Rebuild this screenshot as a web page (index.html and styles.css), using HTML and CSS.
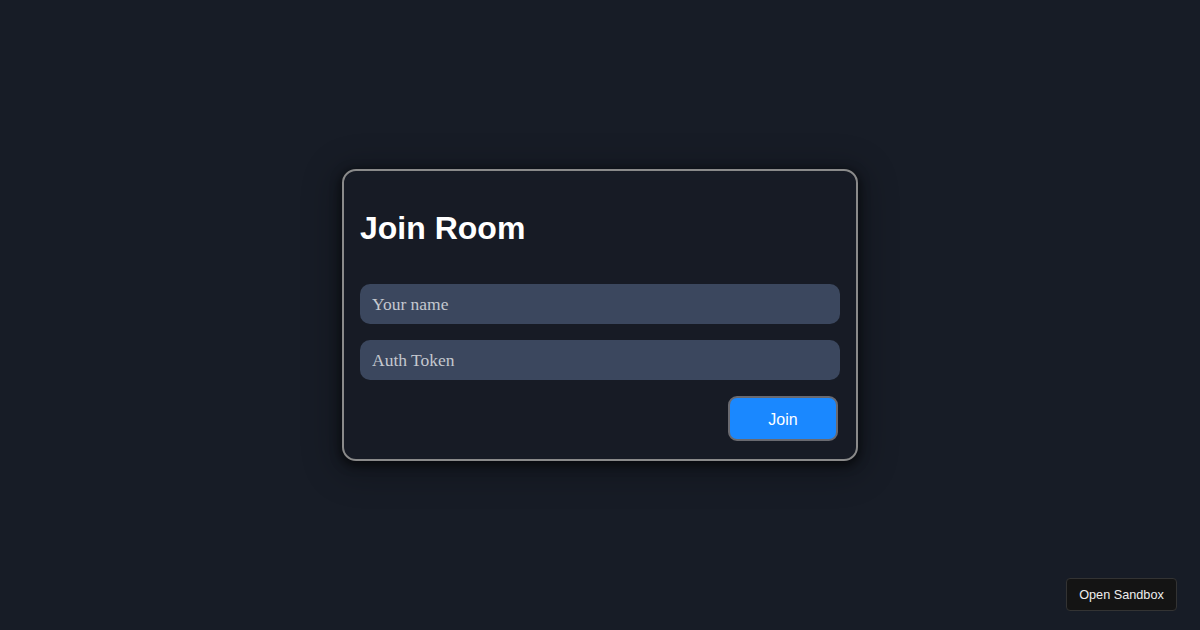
FILE: index.html
```html
<!DOCTYPE html>
<html>
<head>
<meta charset="utf-8">
<link rel="stylesheet" href="styles.css">
</head>
<body>
<main class="page">
  <section class="card">
    <h2 class="title">Join Room</h2>
    <form class="form">
      <input class="field" type="text" placeholder="Your name">
      <input class="field" type="text" placeholder="Auth Token">
      <div class="actions">
        <button class="join" type="button">Join</button>
      </div>
    </form>
  </section>
</main>
<a class="sandbox">Open Sandbox</a>
</body>
</html>
```

FILE: styles.css
```css
html, body {
  margin: 0;
  height: 100%;
  background: #171c26;
}
.page {
  height: 630px;
  display: flex;
  align-items: center;
  justify-content: center;
}
.card {
  box-sizing: border-box;
  width: 516px;
  height: 292px;
  padding: 16px;
  border: 2px solid #8a8a8a;
  border-radius: 14px;
  background: #171b25;
  box-shadow: 0 3px 10px 2px rgba(0, 0, 0, 0.55), 0 6px 32px 10px rgba(0, 0, 0, 0.22);
  display: flex;
  flex-direction: column;
}
.title {
  margin: 23px 0 37px;
  font-family: "Liberation Sans", Arial, sans-serif;
  font-size: 32px;
  line-height: 37px;
  font-weight: 700;
  color: #ffffff;
}
.form {
  display: flex;
  flex-direction: column;
  gap: 16px;
}
.field {
  box-sizing: border-box;
  height: 40px;
  width: 100%;
  border: none;
  border-radius: 10px;
  background: #3b475e;
  padding: 0 12px;
  font-family: "Liberation Serif", "Times New Roman", serif;
  font-size: 17.5px;
  color: #e0e3e8;
  outline: none;
}
.field::placeholder {
  color: #c4c8cf;
}
.actions {
  display: flex;
  justify-content: flex-end;
  padding-right: 2px;
}
.join {
  box-sizing: border-box;
  width: 110px;
  height: 45px;
  padding-top: 4px;
  border: 2px solid #6a6a70;
  border-radius: 9px;
  background: #1a88ff;
  color: #ffffff;
  font-family: "Liberation Sans", Arial, sans-serif;
  font-size: 16px;
}
.sandbox {
  position: fixed;
  right: 23px;
  bottom: 19px;
  box-sizing: border-box;
  width: 111px;
  height: 33px;
  display: flex;
  align-items: center;
  justify-content: center;
  background: #141414;
  border: 1px solid #333333;
  border-radius: 4px;
  color: #eeeeee;
  font-family: "Liberation Sans", Arial, sans-serif;
  font-size: 12.7px;
}
```
